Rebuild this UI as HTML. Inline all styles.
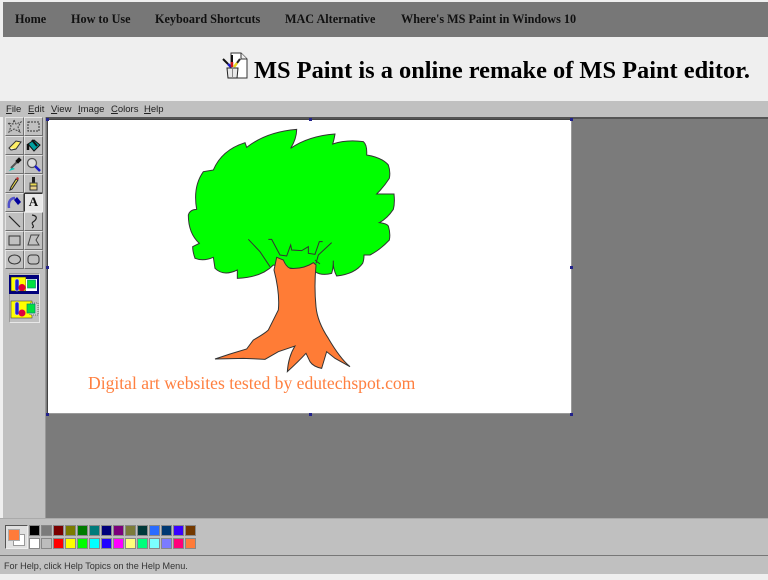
<!DOCTYPE html>
<html><head><meta charset="utf-8"><style>
html,body{margin:0;padding:0;width:768px;height:580px;overflow:hidden;background:#efefef}
body{filter:blur(.3px)}
.a{position:absolute}
#nav{left:3px;top:2px;width:765px;height:35px;background:#777}
.n{position:absolute;top:10px;font:bold 12.2px "Liberation Serif",serif;color:#111;white-space:nowrap}
#h{left:254px;top:56px;font:bold 24.4px/30px "Liberation Serif",serif;color:#000;white-space:nowrap}
#menu{left:0;top:101px;width:768px;height:16px;background:#c0c0c0}
.m{position:absolute;top:3px;font:9.5px "Liberation Sans",sans-serif;color:#222;white-space:nowrap}
.m u{text-decoration:underline}
#tool{left:3px;top:117px;width:43px;height:401px;background:#c0c0c0}
#work{left:46px;top:117px;width:722px;height:401px;background:#7b7b7b}
#canvas{left:48px;top:120px;width:523px;height:293px;background:#fff}
.b{position:absolute;width:19px;height:19px;box-sizing:border-box;background:#c0c0c0;border:1px solid;border-color:#e4e4e4 #707070 #707070 #e4e4e4}
.h{position:absolute;width:3px;height:3px;background:#23238b}
#pal{left:0;top:518px;width:768px;height:37px;background:#c0c0c0;border-top:1px solid #aaa;box-sizing:border-box}
.c{position:absolute;width:11px;height:11px;box-sizing:border-box;border:1px solid #888}
#st{left:0;top:555px;width:768px;height:19px;background:#c0c0c0;border-top:1px solid #777;box-sizing:border-box;font:9.1px/20px "Liberation Sans",sans-serif;color:#333;padding-left:4px}
</style></head><body>
<div class="a" id="nav">
<span class="n" style="left:12px">Home</span><span class="n" style="left:68px">How to Use</span><span class="n" style="left:152px">Keyboard Shortcuts</span><span class="n" style="left:282px">MAC Alternative</span><span class="n" style="left:398px">Where's MS Paint in Windows 10</span>
</div>
<svg class="a" style="left:222px;top:52px" width="28" height="28" viewBox="0 0 28 28">
<path d="M9 1H19L25 7V26H9Z" fill="#fff" stroke="#333"/><path d="M19 1V7H25" fill="#eee" stroke="#333"/>
<path d="M5 16H16L15 26H6Z" fill="#e8e8e8" stroke="#222"/><path d="M10.5 17V26" stroke="#888"/>
<path d="M1 7L6 12" stroke="#111" stroke-width="2"/><path d="M6 12L9 15" stroke="#1c1cc8" stroke-width="2.5"/>
<path d="M10 3V10" stroke="#111" stroke-width="2"/><path d="M10 10V15" stroke="#d01818" stroke-width="2.5"/>
<path d="M18 7L15 11" stroke="#222" stroke-width="2"/><path d="M15 11L12 15" stroke="#e8d820" stroke-width="2.5"/>
</svg>
<div class="a" id="h">MS Paint is a online remake of MS Paint editor.</div>
<div class="a" id="menu">
<span class="m" style="left:6px"><u>F</u>ile</span><span class="m" style="left:28px"><u>E</u>dit</span><span class="m" style="left:51px"><u>V</u>iew</span><span class="m" style="left:78px"><u>I</u>mage</span><span class="m" style="left:111px"><u>C</u>olors</span><span class="m" style="left:144px"><u>H</u>elp</span>
</div>
<div class="a" id="tool"></div>
<div class="a" id="work" style="border-top:2px solid #555;box-sizing:border-box;height:401px"></div>
<div class="a" style="left:45px;top:117px;width:1px;height:401px;background:#999"></div>
<div class="a" id="canvas"></div>
<div class="a" style="left:47px;top:119px;width:525px;height:295px;box-sizing:border-box;border:1px solid #9a9a9a;border-left-color:#444;border-top-color:#444"></div>
<div class="h" style="left:46px;top:118px"></div><div class="h" style="left:309px;top:118px"></div><div class="h" style="left:570px;top:118px"></div>
<div class="h" style="left:46px;top:266px"></div><div class="h" style="left:570px;top:266px"></div>
<div class="h" style="left:46px;top:413px"></div><div class="h" style="left:309px;top:413px"></div><div class="h" style="left:570px;top:413px"></div>

<svg class="a" style="left:180px;top:120px" width="220" height="160" viewBox="0 0 660 480">
<path vector-effect="non-scaling-stroke" stroke-width="1" stroke="#333" fill="#00ff00" d="M350 28Q350 55 332 85Q385 48 465 42Q462 60 458 72Q500 58 550 65Q562 75 560 105Q605 112 625 135Q632 155 628 175Q612 200 590 222L642 222Q645 250 640 268Q622 295 598 308Q620 310 625 318Q632 340 628 360Q600 390 570 405L552 405Q552 420 548 430Q525 462 470 468Q458 445 460 422Q460 445 455 460Q425 468 405 455L300 440L280 435Q245 472 172 475L172 450Q130 470 105 445L100 412Q70 425 45 415Q38 395 38 380L58 370Q25 340 25 285Q30 268 50 268Q38 200 70 155L100 150Q125 90 195 68L200 82Q260 35 350 28Z"/>
</svg>
<svg class="a" style="left:200px;top:250px" width="160" height="130" viewBox="0 0 480 390">
<path vector-effect="non-scaling-stroke" stroke-width="1" stroke="#333" fill="#ff7c36" d="M230 22L250 30Q258 50 270 55Q310 58 340 38L348 45Q342 110 348 170Q352 215 385 265Q420 325 450 350L405 325L380 305L365 355Q340 350 330 335L318 310Q295 335 262 365Q265 320 285 288L235 305L195 328L130 325L45 327L90 312L140 297L160 270Q195 250 205 240L235 180Q240 130 222 60Z"/>
</svg>
<svg class="a" style="left:180px;top:120px" width="220" height="160" viewBox="0 0 660 480" fill="none">
<path vector-effect="non-scaling-stroke" stroke-width="1" stroke="#333" d="M205 358L240 395L270 440M265 358L275 358L300 405L320 408L332 375L335 390L365 392L385 380L385 400L405 403L418 365L428 365M408 430L415 405L455 368M405 420L420 432"/>
</svg>
<div class="a" style="left:88px;top:372px;font:17.6px/22px 'Liberation Serif',serif;color:#ff8040;white-space:nowrap">Digital art websites tested by edutechspot.com</div>

<!-- tools -->
<div class="b" style="left:5px;top:117px"><svg width="17" height="17" fill="none"><path d="M8 2L10 6L15 4L12 9L14 14L8 11L3 14L5 8L2 5L7 6Z" stroke="#444" stroke-dasharray="2 1"/></svg></div>
<div class="b" style="left:24px;top:117px"><svg width="17" height="17" fill="none"><rect x="3" y="4" width="11" height="9" stroke="#333" stroke-dasharray="2 1"/></svg></div>
<div class="b" style="left:5px;top:136px"><svg width="17" height="17"><path d="M3 11L10 4L15 5L10 12L5 13Z" fill="#ffef66" stroke="#333"/><path d="M3 11L5 13L10 12" fill="#fff" stroke="#333"/></svg></div>
<div class="b" style="left:24px;top:136px"><svg width="17" height="17"><path d="M3 7L9 3L15 8L9 14Z" fill="#00a0a0" stroke="#111"/><path d="M3 7V13" stroke="#111" stroke-width="2.5"/><path d="M7 3L12 9" stroke="#111" stroke-width="2"/></svg></div>
<div class="b" style="left:5px;top:155px"><svg width="17" height="17"><path d="M3 15L6 11L9 13Z" fill="#00d0c0"/><path d="M5 12L11 6" stroke="#555" stroke-width="2"/><path d="M10 5L13 2L15 4L12 7Z" fill="#111" stroke="#111"/></svg></div>
<div class="b" style="left:24px;top:155px"><svg width="17" height="17" fill="none"><circle cx="7" cy="7" r="4.5" stroke="#555" stroke-width="1.3" fill="#ddd"/><path d="M10 10L15 15" stroke="#1a1ac8" stroke-width="2.5"/></svg></div>
<div class="b" style="left:5px;top:174px"><svg width="17" height="17"><path d="M6 14L4 15L5 12L10 4L12 5Z" fill="#e8d850" stroke="#222"/><path d="M10 4L11 2L13 3L12 5Z" fill="#c03030"/></svg></div>
<div class="b" style="left:24px;top:174px"><svg width="17" height="17"><path d="M7 2H10V8H7Z" fill="#222"/><path d="M5 8H12V11H5Z" fill="#e8d850" stroke="#444"/><path d="M5 11H12V15H5Z" fill="#e8d088" stroke="#333"/></svg></div>
<div class="b" style="left:5px;top:193px"><svg width="17" height="17" fill="none"><path d="M3 14C2 7 5 4 9 4" stroke="#5050c8" stroke-width="2.5"/><path d="M8 6L11 3L15 8L12 11Z" fill="#00009c"/></svg></div>
<div class="b" style="left:24px;top:193px;background:#e8e8e8;border-color:#333 #eee #eee #333"><div style="font:bold 13px/16px 'Liberation Serif',serif;text-align:center;color:#111">A</div></div>
<div class="b" style="left:5px;top:212px"><svg width="17" height="17" fill="none"><path d="M3 3L14 14" stroke="#222" stroke-width="1.2"/></svg></div>
<div class="b" style="left:24px;top:212px"><svg width="17" height="17" fill="none"><path d="M7 2C14 3 11 7 8 9C5 11 11 13 7 15" stroke="#222" stroke-width="1.2"/></svg></div>
<div class="b" style="left:5px;top:231px"><svg width="17" height="17" fill="none"><rect x="3" y="4" width="11" height="9" stroke="#333"/></svg></div>
<div class="b" style="left:24px;top:231px"><svg width="17" height="17" fill="none"><path d="M6 3H14L11 8L14 13H3Z" stroke="#444"/></svg></div>
<div class="b" style="left:5px;top:250px"><svg width="17" height="17" fill="none"><ellipse cx="8.5" cy="8.5" rx="6" ry="4.5" stroke="#333"/></svg></div>
<div class="b" style="left:24px;top:250px"><svg width="17" height="17" fill="none"><rect x="3" y="4" width="11" height="9" rx="3" stroke="#333"/></svg></div>

<div class="a" style="left:9px;top:273px;width:31px;height:50px;box-sizing:border-box;border:1px solid;border-color:#999 #e8e8e8 #e8e8e8 #999"></div>
<svg class="a" style="left:9px;top:273px" width="30" height="50" viewBox="0 0 30 50">
<rect x="0" y="2" width="30" height="19" fill="#00007b"/>
<rect x="2" y="4" width="15" height="14" fill="#ffff00" stroke="#222" stroke-width=".6"/>
<rect x="6" y="6" width="4" height="12" rx="2" fill="#2020d0" stroke="#dde" stroke-width=".6"/>
<circle cx="13" cy="14.5" r="3.5" fill="#e00030"/>
<rect x="17" y="6" width="11" height="12" fill="#fff"/><rect x="18.5" y="7" width="8" height="8" fill="#00e040" stroke="#087" stroke-width=".7"/>
<rect x="2" y="28" width="21" height="17" fill="#ffff00" stroke="#444" stroke-width=".6"/>
<rect x="6" y="29" width="4" height="13" rx="2" fill="#2020d0" stroke="#dde" stroke-width=".6"/>
<circle cx="13" cy="40" r="3.5" fill="#e00040"/>
<rect x="21" y="30" width="8" height="12" fill="#d0d0d0" stroke="#555" stroke-width=".8" stroke-dasharray="1 1"/>
<rect x="18" y="31" width="8" height="9" fill="#00e040" stroke="#087" stroke-width=".7"/>
</svg>

<!-- palette -->
<div class="a" id="pal"></div>
<div class="a" style="left:5px;top:525px;width:23px;height:24px;box-sizing:border-box;background:#e0e0e0;border:1px solid;border-color:#555 #eee #eee #555"></div>
<div class="a" style="left:14px;top:535px;width:10px;height:10px;background:#fff;box-shadow:0 0 0 1px #999"></div>
<div class="a" style="left:9px;top:530px;width:10px;height:10px;background:#ff7b39;box-shadow:0 0 0 1px #aaa"></div>
<div class="c" style="left:29px;top:525px;background:#000"></div><div class="c" style="left:41px;top:525px;background:#7b7b7b"></div><div class="c" style="left:53px;top:525px;background:#7b0000"></div><div class="c" style="left:65px;top:525px;background:#7b7b00"></div><div class="c" style="left:77px;top:525px;background:#007b00"></div><div class="c" style="left:89px;top:525px;background:#007b7b"></div><div class="c" style="left:101px;top:525px;background:#00007b"></div><div class="c" style="left:113px;top:525px;background:#7b007b"></div><div class="c" style="left:125px;top:525px;background:#7b7b39"></div><div class="c" style="left:137px;top:525px;background:#003939"></div><div class="c" style="left:149px;top:525px;background:#2a6cff"></div><div class="c" style="left:161px;top:525px;background:#003973"></div><div class="c" style="left:173px;top:525px;background:#3900ff"></div><div class="c" style="left:185px;top:525px;background:#733900"></div>
<div class="c" style="left:29px;top:538px;background:#fff"></div><div class="c" style="left:41px;top:538px;background:#bdbdbd"></div><div class="c" style="left:53px;top:538px;background:#f00"></div><div class="c" style="left:65px;top:538px;background:#ff0"></div><div class="c" style="left:77px;top:538px;background:#0f0"></div><div class="c" style="left:89px;top:538px;background:#0ff"></div><div class="c" style="left:101px;top:538px;background:#2000ff"></div><div class="c" style="left:113px;top:538px;background:#f0f"></div><div class="c" style="left:125px;top:538px;background:#ffff7b"></div><div class="c" style="left:137px;top:538px;background:#00ff7b"></div><div class="c" style="left:149px;top:538px;background:#7bffff"></div><div class="c" style="left:161px;top:538px;background:#7b7bff"></div><div class="c" style="left:173px;top:538px;background:#ff007b"></div><div class="c" style="left:185px;top:538px;background:#ff7b39"></div>
<div class="a" id="st">For Help, click Help Topics on the Help Menu.</div>
</body></html>
